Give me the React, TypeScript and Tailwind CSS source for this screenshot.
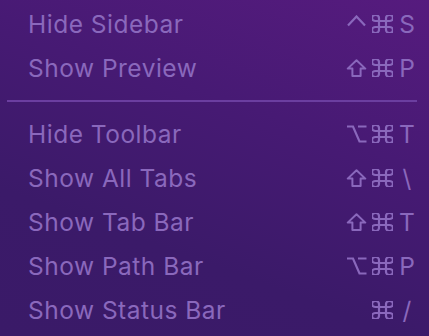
import React from 'react';

type Mod = 'ctrl' | 'shift' | 'opt' | 'none';

const items: { label: string; mod: Mod; key: string }[][] = [
  [
    { label: 'Hide Sidebar', mod: 'ctrl', key: 'S' },
    { label: 'Show Preview', mod: 'shift', key: 'P' },
  ],
  [
    { label: 'Hide Toolbar', mod: 'opt', key: 'T' },
    { label: 'Show All Tabs', mod: 'shift', key: '\\' },
    { label: 'Show Tab Bar', mod: 'shift', key: 'T' },
    { label: 'Show Path Bar', mod: 'opt', key: 'P' },
    { label: 'Show Status Bar', mod: 'none', key: '/' },
  ],
];

function ModIcon({ mod }: { mod: Mod }) {
  if (mod === 'ctrl') {
    return (
      <svg width="21" height="18" viewBox="0 0 21 18">
        <polyline points="2,10.5 10.5,1.5 19,10.5" fill="none" stroke="currentColor" strokeWidth="2.2" />
      </svg>
    );
  }
  if (mod === 'shift') {
    return (
      <svg width="21" height="18" viewBox="0 0 21 18">
        <path d="M10.5 1.2 L19.3 9.6 L14.6 9.6 L14.6 17 L6.4 17 L6.4 9.6 L1.7 9.6 Z" fill="none" stroke="currentColor" strokeWidth="2" strokeLinejoin="round" />
      </svg>
    );
  }
  if (mod === 'opt') {
    return (
      <svg width="21" height="18" viewBox="0 0 21 18">
        <path d="M1 1.5 L7 1.5 L13.5 16.5 L20.5 16.5 M12 1.5 L20.5 1.5" fill="none" stroke="currentColor" strokeWidth="2.2" />
      </svg>
    );
  }
  return <div className="w-[21px] h-[18px]" />;
}

function CmdIcon() {
  return (
    <svg width="21" height="18" viewBox="3 3 18 18" preserveAspectRatio="none">
      <path
        d="M15 6v12a3 3 0 1 0 3-3H6a3 3 0 1 0 3 3V6a3 3 0 1 0-3 3h12a3 3 0 1 0-3-3"
        fill="none"
        stroke="currentColor"
        strokeWidth="2.2"
        vectorEffect="non-scaling-stroke"
      />
    </svg>
  );
}

function Row({ label, mod, k }: { label: string; mod: Mod; k: string }) {
  return (
    <div className="h-[44px] flex items-center justify-between pl-[28px] pr-[12px]">
      <span className="text-[24.5px] tracking-[0.5px] leading-none">{label}</span>
      <div className="flex items-center">
        <div className="w-[21px] flex justify-center">
          <ModIcon mod={mod} />
        </div>
        <div className="w-[21px] ml-[5px] flex justify-center">
          <CmdIcon />
        </div>
        <div className="w-[20px] ml-[4px] text-center text-[24.5px] leading-none">{k}</div>
      </div>
    </div>
  );
}

export default function App() {
  return (
    <div className="w-[429px] h-[336px] overflow-hidden pt-[2px] text-[#8a68bc] font-['Inter','Noto_Sans',sans-serif] bg-[linear-gradient(200deg,#561b7e_0%,#471a74_35%,#3b1a69_70%,#3a1a68_100%)]">
      {items[0].map((it) => (
        <Row key={it.label} label={it.label} mod={it.mod} k={it.key} />
      ))}
      <div className="h-[22px] flex items-center pl-[7px] pr-[12px]">
        <div className="h-[2px] w-full bg-[#6b3ea0]" />
      </div>
      {items[1].map((it) => (
        <Row key={it.label} label={it.label} mod={it.mod} k={it.key} />
      ))}
    </div>
  );
}
